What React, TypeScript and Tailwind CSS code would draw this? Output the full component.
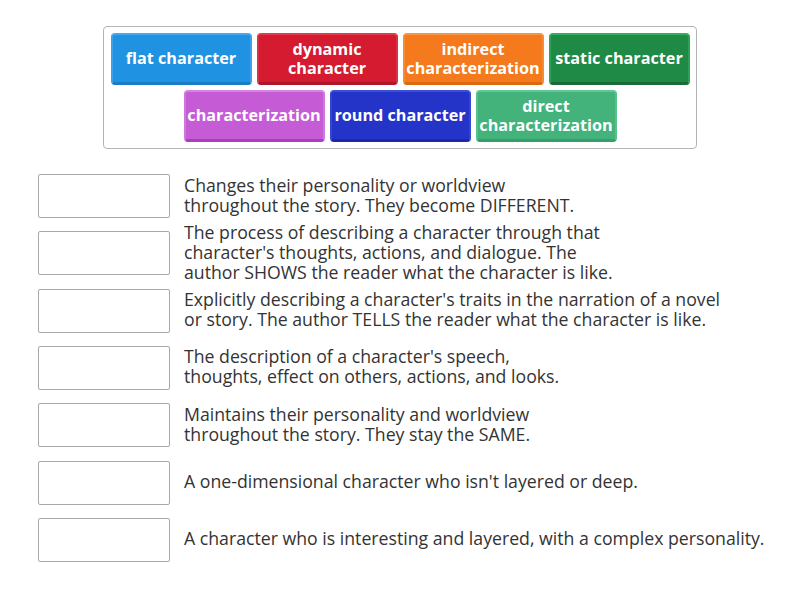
import React from "react";

const tiles: { lines: string[]; bg: string }[][] = [
  [
    { lines: ["flat character"], bg: "bg-[#1f92e2] border-t-[#46a9ef] border-x-[#3aa2ec] border-b-[#1a7cc6]" },
    { lines: ["dynamic", "character"], bg: "bg-[#d41b2f] border-t-[#e2394d] border-x-[#dd3044] border-b-[#b01428]" },
    { lines: ["indirect", "characterization"], bg: "bg-[#f47a1d] border-t-[#f9953e] border-x-[#f78b32] border-b-[#dc6810]" },
    { lines: ["static character"], bg: "bg-[#1f8a45] border-t-[#33b05e] border-x-[#2ba355] border-b-[#196c36]" },
  ],
  [
    { lines: ["characterization"], bg: "bg-[#c55cd6] border-t-[#d684e2] border-x-[#d077de] border-b-[#b03ac4]" },
    { lines: ["round character"], bg: "bg-[#2434c8] border-t-[#3d4dda] border-x-[#3444d4] border-b-[#1c28a6]" },
    { lines: ["direct", "characterization"], bg: "bg-[#43b37b] border-t-[#62c795] border-x-[#58c08c] border-b-[#379f69]" },
  ],
];

const rows: string[][] = [
  ["Changes their personality or worldview", "throughout the story. They become DIFFERENT."],
  ["The process of describing a character through that", "character's thoughts, actions, and dialogue. The", "author SHOWS the reader what the character is like."],
  ["Explicitly describing a character's traits in the narration of a novel", "or story. The author TELLS the reader what the character is like."],
  ["The description of a character's speech,", "thoughts, effect on others, actions, and looks."],
  ["Maintains their personality and worldview", "throughout the story. They stay the SAME."],
  ["A one-dimensional character who isn't layered or deep."],
  ["A character who is interesting and layered, with a complex personality."],
];

export default function App() {
  return (
    <div className="w-[800px] h-[600px] bg-white overflow-hidden" style={{ fontFamily: '"Open Sans", "Noto Sans", sans-serif' }}>
      <div className="mt-[26px] ml-[103px] w-[594px] h-[123px] border border-[#b4b4b4] rounded-[4px] pt-[6px] flex flex-col items-center gap-[5px]">
        {tiles.map((row, ri) => (
          <div key={ri} className="flex gap-[5px]">
            {row.map((t, ti) => (
              <div
                key={ti}
                className={`w-[141px] h-[52px] rounded-[4px] border-t-2 border-x-2 border-b-[3px] flex flex-col items-center justify-center text-white font-bold text-[16.2px] leading-[19px] ${t.bg}`}
              >
                {t.lines.map((l, li) => (
                  <span key={li} className="whitespace-nowrap">{l}</span>
                ))}
              </div>
            ))}
          </div>
        ))}
      </div>
      <div className="mt-[25px] ml-[38px] flex flex-col gap-[13.33px]">
        {rows.map((lines, i) => (
          <div key={i} className="h-[44px] flex items-center gap-[14px]">
            <div className="w-[132px] h-[44px] shrink-0 border border-[#a8a8a8] rounded-[2px] bg-white" />
            <div className="text-[17.7px] leading-[20px] text-[#333333] -mt-[3px]">
              {lines.map((l, li) => (
                <div key={li} className="whitespace-nowrap">{l}</div>
              ))}
            </div>
          </div>
        ))}
      </div>
    </div>
  );
}
